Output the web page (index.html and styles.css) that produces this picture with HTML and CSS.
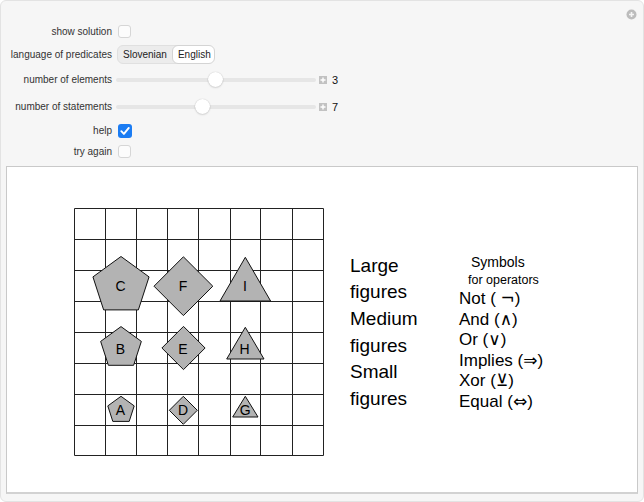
FILE: index.html
```html
<!DOCTYPE html>
<html>
<head>
<meta charset="utf-8">
<link rel="stylesheet" href="styles.css">
</head>
<body>
<div class="panel">
  <span class="opts"><svg width="11" height="11" viewBox="0 0 11 11"><circle cx="5.5" cy="5.5" r="5" fill="#bcbcbc"/><path d="M5.5 3v5M3 5.5h5" stroke="#f4f4f4" stroke-width="1.6"/></svg></span>
  <div class="controls">
    <div class="row r-check"><span class="lbl">show solution</span><span class="cb"></span></div>
    <div class="row r-seg"><span class="lbl">language of predicates</span>
      <span class="seg"><span class="opt">Slovenian</span><span class="opt on">English</span></span></div>
    <div class="row r-slider"><span class="lbl">number of elements</span>
      <span class="slider"><span class="track"></span><span class="thumb" style="left:92px"></span></span>
      <span class="plus"><svg width="8" height="8" viewBox="0 0 8 8"><rect width="8" height="8" fill="#c2c2c2"/><path d="M4 1.5v5M1.5 4h5" stroke="#fff" stroke-width="1.4"/></svg></span><span class="val">3</span></div>
    <div class="row r-slider"><span class="lbl">number of statements</span>
      <span class="slider"><span class="track"></span><span class="thumb" style="left:79px"></span></span>
      <span class="plus"><svg width="8" height="8" viewBox="0 0 8 8"><rect width="8" height="8" fill="#c2c2c2"/><path d="M4 1.5v5M1.5 4h5" stroke="#fff" stroke-width="1.4"/></svg></span><span class="val">7</span></div>
    <div class="row r-check"><span class="lbl">help</span><span class="cb checked"><svg width="14" height="14" viewBox="0 0 14 14"><path d="M3.3 7.2l2.6 2.7 4.9-6" fill="none" stroke="#fff" stroke-width="1.9" stroke-linecap="round" stroke-linejoin="round"/></svg></span></div>
    <div class="row r-check"><span class="lbl">try again</span><span class="cb"></span></div>
  </div>
  <div class="output">
    <svg class="board" width="252" height="250" viewBox="73 207 252 250">
      <g stroke="#222" stroke-width="1" fill="none">
        <path d="M74.5 208.5V455.5M105.5 208.5V455.5M136.5 208.5V455.5M167.5 208.5V455.5M198.5 208.5V455.5M230.5 208.5V455.5M260.5 208.5V455.5M292.5 208.5V455.5M323.5 208.5V455.5"/>
        <path d="M74.5 208.5H323.5M74.5 239.5H323.5M74.5 270.5H323.5M74.5 301.5H323.5M74.5 332.5H323.5M74.5 363.5H323.5M74.5 394.5H323.5M74.5 425.5H323.5M74.5 455.5H323.5"/>
      </g>
      <g fill="#b3b3b3" stroke="#111" stroke-width="1">
        <polygon points="121,256.5 149.05,276.9 138.35,309.9 103.65,309.9 92.95,276.9"/>
        <polygon points="121,326.6 141.35,341.4 133.6,365.3 108.4,365.3 100.65,341.4"/>
        <polygon points="121,396.3 134.2,405.9 129.2,421.4 112.8,421.4 107.8,405.9"/>
        <polygon points="183.4,256.8 212.8,286.2 183.4,315.6 154,286.2"/>
        <polygon points="183.5,326.4 205.1,348 183.5,369.6 161.9,348"/>
        <polygon points="183.3,396.3 197.3,410.3 183.3,424.3 169.3,410.3"/>
        <polygon points="245.3,257.3 270.6,301 220,301"/>
        <polygon points="245.3,327.3 264,359 226.7,359"/>
        <polygon points="245.3,396.3 258,417 232.7,417"/>
      </g>
      <g class="lab" text-anchor="middle">
        <text x="120.5" y="290.8">C</text>
        <text x="183" y="290.8">F</text>
        <text x="245" y="290.8">I</text>
        <text x="120.3" y="354">B</text>
        <text x="183" y="354">E</text>
        <text x="244.5" y="354">H</text>
        <text x="120.5" y="415.3">A</text>
        <text x="183" y="415.3">D</text>
        <text x="245.3" y="415.3">G</text>
      </g>
    </svg>
    <div class="sizes">
      <div>Large</div>
      <div>figures</div>
      <div>Medium</div>
      <div>figures</div>
      <div>Small</div>
      <div>figures</div>
    </div>
    <div class="symbols">
      <div class="s-head">Symbols</div>
      <div class="s-sub">for operators</div>
      <div class="s-item first">Not ( <span class="op">¬</span>)</div>
      <div class="s-item">And (<span class="op">∧</span>)</div>
      <div class="s-item">Or (<span class="op">∨</span>)</div>
      <div class="s-item">Implies (<span class="op">⇒</span>)</div>
      <div class="s-item">Xor (<span class="op">⊻</span>)</div>
      <div class="s-item">Equal (<span class="op">⇔</span>)</div>
    </div>
  </div>
</div>
</body>
</html>
```
FILE: styles.css
```css
html, body {
  margin: 0;
  padding: 0;
  background: #ffffff;
}
body {
  font-family: "Liberation Sans", Arial, sans-serif;
}
.panel {
  position: relative;
  width: 644px;
  height: 502px;
  background: #f6f6f6;
  border: 1px solid #e3e3e3;
  border-radius: 6px;
  padding: 20px 5px 0 5px;
  box-sizing: border-box;
}
.opts {
  position: absolute;
  right: 6px;
  top: 8px;
  display: flex;
}
.controls {
  display: flex;
  flex-direction: column;
}
.row {
  display: flex;
  align-items: center;
  font-size: 10px;
  color: #333;
}
.r-check { height: 21px; }
.r-seg { height: 24px; }
.r-slider { height: 27px; }
.lbl {
  width: 106px;
  text-align: right;
  margin-right: 6px;
  white-space: nowrap;
}
.cb {
  width: 13px;
  height: 13px;
  border: 1px solid #d6d6d6;
  border-radius: 3px;
  background: #fcfcfc;
  box-sizing: border-box;
  display: flex;
}
.cb.checked {
  width: 14px;
  height: 14px;
  background: #1b7cf3;
  border: none;
  border-radius: 3px;
}
.seg {
  display: flex;
  align-items: center;
  height: 19px;
  width: 95px;
  margin-left: -1px;
  box-sizing: border-box;
  background: #ececec;
  border: 1px solid #e0e0e0;
  border-radius: 6px;
}
.opt {
  padding: 0 5px 0 5px;
  color: #222;
}
.opt.on {
  margin-left: auto;
  height: 19px;
  width: 43px;
  margin-right: -1px;
  box-sizing: border-box;
  padding-left: 5px;
  line-height: 17px;
  background: #fff;
  border: 1px solid #d4d4d4;
  border-radius: 6px;
}
.slider {
  position: relative;
  width: 200px;
  height: 16px;
  margin-left: -2px;
  display: flex;
  align-items: center;
}
.track {
  width: 200px;
  height: 4px;
  border-radius: 2px;
  background: #e6e6e6;
}
.thumb {
  position: absolute;
  top: 0;
  width: 15px;
  height: 15px;
  border-radius: 50%;
  background: #fff;
  box-shadow: 0 0 1px rgba(0,0,0,0.25), 0 1px 2px rgba(0,0,0,0.12);
}
.plus {
  display: flex;
  margin-left: 3px;
}
.val {
  margin-left: 5px;
  font-size: 11px;
  color: #111;
}
.output {
  margin-top: 4px;
  height: 328px;
  background: #fff;
  border: 1px solid #c9c9c9;
  border-bottom: 2px solid #d2d2d2;
  box-sizing: border-box;
  display: flex;
  align-items: flex-start;
}
.board {
  margin-left: 66px;
  margin-top: 40px;
  flex: none;
}
.lab text {
  font-family: "Liberation Sans", Arial, sans-serif;
  font-size: 14px;
  fill: #000;
}
.sizes {
  margin-left: 25px;
  margin-top: 85.5px;
  width: 109px;
  flex: none;
  font-size: 19px;
  line-height: 26.7px;
  color: #000;
}
.symbols {
  margin-top: 87px;
  color: #000;
}
.s-head {
  font-size: 14px;
  line-height: 16px;
  padding-left: 12px;
}
.s-sub {
  font-size: 12.5px;
  line-height: 13px;
  padding-left: 9px;
  margin-top: 4px;
}
.s-item {
  font-size: 17px;
  line-height: 20.5px;
  height: 20.5px;
  white-space: nowrap;
}
.s-item.first {
  margin-top: 1px;
}
.op {
  font-family: "DejaVu Sans", sans-serif;
  font-size: 17px;
}
```
